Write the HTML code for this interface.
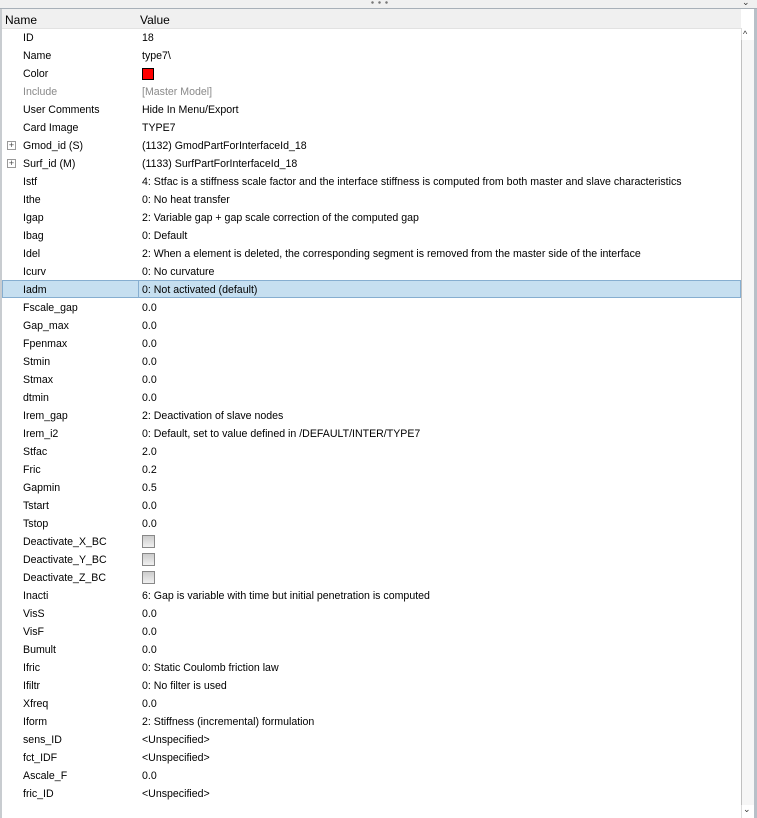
<!DOCTYPE html>
<html><head><style>
body{margin:0;width:757px;height:818px;overflow:hidden;background:#fff;font-family:"Liberation Sans",sans-serif;font-size:10.6px;color:#000;position:relative}
.top{position:absolute;left:0;top:0;width:757px;height:8px;background:#f0f0f0;border-bottom:1px solid #a8b0b8}
.dots{position:absolute;left:369px;top:1px;width:20px;height:3px;background:radial-gradient(circle,#777 1px,transparent 1.5px) 0 0/7px 3px}
.hdr{position:absolute;left:0;top:9px;width:741px;height:19px;background:#f0f0f0;border-bottom:1px solid #e2e2e2}
.hdr span{position:absolute;top:4px;font-size:12px}
.lb{position:absolute;left:0;top:9px;width:2px;height:809px;background:#c8ccd0}
.rows{position:absolute;left:2px;top:28px;width:739px}
.r{height:18px;position:relative;white-space:nowrap}
.r .n{position:absolute;left:21px;top:4px}
.r .v{position:absolute;left:140px;top:4px}
.sel{background:#c6dff0;box-shadow:inset 0 0 0 1px #86aed0}
.g{color:#8a8a8a}
.pl{position:absolute;left:5px;top:5px;width:7px;height:7px;border:1px solid #999;font-size:9px;line-height:7px;text-align:center;color:#444}
.sw{position:absolute;left:140px;top:4px;width:12px;height:12px;background:#f00;border:1px solid #000;box-sizing:border-box}
.cb{position:absolute;left:140px;top:3px;width:13px;height:13px;border:1px solid #888;box-sizing:border-box;background:linear-gradient(#ccc,#f0f0f0)}
.sb{position:absolute;left:741px;top:28px;width:13px;height:790px;background:#fff;border-left:1px solid #ddd}
.th{position:absolute;left:741px;top:40px;width:12px;height:765px;border-left:1px solid #c0c0c0;background:#f6f6f6}
.rb{position:absolute;left:754px;top:9px;width:3px;height:809px;background:#b8c0c8}
.arr{position:absolute;font-size:9px;color:#333}
</style></head><body>
<div class="top"><span class="dots"></span><span class="arr" style="left:742px;top:-3px">⌄</span></div>
<div class="hdr"><span style="left:5px">Name</span><span style="left:140px">Value</span></div>
<div class="lb"></div>
<div class="rows">
<div class="r"><span class="n">ID</span><span class="v">18</span></div>
<div class="r"><span class="n">Name</span><span class="v">type7\</span></div>
<div class="r"><span class="n">Color</span><span class="sw"></span></div>
<div class="r g"><span class="n">Include</span><span class="v">[Master Model]</span></div>
<div class="r"><span class="n">User Comments</span><span class="v">Hide In Menu/Export</span></div>
<div class="r"><span class="n">Card Image</span><span class="v">TYPE7</span></div>
<div class="r"><span class="pl">+</span><span class="n">Gmod_id (S)</span><span class="v">(1132) GmodPartForInterfaceId_18</span></div>
<div class="r"><span class="pl">+</span><span class="n">Surf_id (M)</span><span class="v">(1133) SurfPartForInterfaceId_18</span></div>
<div class="r"><span class="n">Istf</span><span class="v">4: Stfac is a stiffness scale factor and the interface stiffness is computed from both master and slave characteristics</span></div>
<div class="r"><span class="n">Ithe</span><span class="v">0: No heat transfer</span></div>
<div class="r"><span class="n">Igap</span><span class="v">2: Variable gap + gap scale correction of the computed gap</span></div>
<div class="r"><span class="n">Ibag</span><span class="v">0: Default</span></div>
<div class="r"><span class="n">Idel</span><span class="v">2: When a element is deleted, the corresponding segment is removed from the master side of the interface</span></div>
<div class="r"><span class="n">Icurv</span><span class="v">0: No curvature</span></div>
<div class="r sel"><span class="n">Iadm</span><span style="position:absolute;left:136px;top:1px;width:1px;height:16px;background:#86aed0"></span><span class="v">0: Not activated (default)</span></div>
<div class="r"><span class="n">Fscale_gap</span><span class="v">0.0</span></div>
<div class="r"><span class="n">Gap_max</span><span class="v">0.0</span></div>
<div class="r"><span class="n">Fpenmax</span><span class="v">0.0</span></div>
<div class="r"><span class="n">Stmin</span><span class="v">0.0</span></div>
<div class="r"><span class="n">Stmax</span><span class="v">0.0</span></div>
<div class="r"><span class="n">dtmin</span><span class="v">0.0</span></div>
<div class="r"><span class="n">Irem_gap</span><span class="v">2: Deactivation of slave nodes</span></div>
<div class="r"><span class="n">Irem_i2</span><span class="v">0: Default, set to value defined in /DEFAULT/INTER/TYPE7</span></div>
<div class="r"><span class="n">Stfac</span><span class="v">2.0</span></div>
<div class="r"><span class="n">Fric</span><span class="v">0.2</span></div>
<div class="r"><span class="n">Gapmin</span><span class="v">0.5</span></div>
<div class="r"><span class="n">Tstart</span><span class="v">0.0</span></div>
<div class="r"><span class="n">Tstop</span><span class="v">0.0</span></div>
<div class="r"><span class="n">Deactivate_X_BC</span><span class="cb"></span></div>
<div class="r"><span class="n">Deactivate_Y_BC</span><span class="cb"></span></div>
<div class="r"><span class="n">Deactivate_Z_BC</span><span class="cb"></span></div>
<div class="r"><span class="n">Inacti</span><span class="v">6: Gap is variable with time but initial penetration is computed</span></div>
<div class="r"><span class="n">VisS</span><span class="v">0.0</span></div>
<div class="r"><span class="n">VisF</span><span class="v">0.0</span></div>
<div class="r"><span class="n">Bumult</span><span class="v">0.0</span></div>
<div class="r"><span class="n">Ifric</span><span class="v">0: Static Coulomb friction law</span></div>
<div class="r"><span class="n">Ifiltr</span><span class="v">0: No filter is used</span></div>
<div class="r"><span class="n">Xfreq</span><span class="v">0.0</span></div>
<div class="r"><span class="n">Iform</span><span class="v">2: Stiffness (incremental) formulation</span></div>
<div class="r"><span class="n">sens_ID</span><span class="v">&lt;Unspecified&gt;</span></div>
<div class="r"><span class="n">fct_IDF</span><span class="v">&lt;Unspecified&gt;</span></div>
<div class="r"><span class="n">Ascale_F</span><span class="v">0.0</span></div>
<div class="r"><span class="n">fric_ID</span><span class="v">&lt;Unspecified&gt;</span></div>
</div>
<div class="sb"></div>
<div class="th"></div>
<div class="arr" style="left:743px;top:29px">^</div>
<div class="arr" style="left:743px;top:804px">⌄</div>
<div class="rb"></div>
</body></html>
